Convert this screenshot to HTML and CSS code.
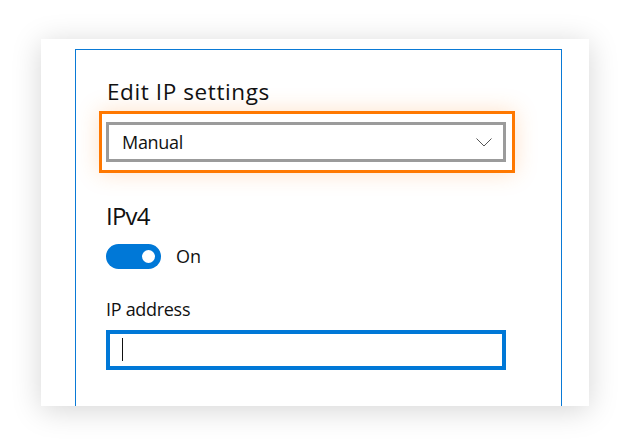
FILE: index.html
```html
<!DOCTYPE html>
<html>
<head>
<meta charset="utf-8">
<link rel="stylesheet" href="styles.css">
</head>
<body>
<div class="page">
  <div class="card">
    <div class="frame">
      <h2 class="title">Edit IP settings</h2>
      <div class="highlight">
        <div class="select">
          <span class="select-value">Manual</span>
          <svg class="chevron" width="16" height="9" viewBox="0 0 16 9"><polyline points="0.5,0.5 8,8 15.5,0.5" fill="none" stroke="#555" stroke-width="1"/></svg>
        </div>
      </div>
      <h3 class="subtitle">IPv4</h3>
      <div class="toggle-row">
        <span class="toggle"><span class="knob"></span></span>
        <span class="toggle-label">On</span>
      </div>
      <label class="field-label">IP address</label>
      <div class="input"><span class="caret"></span></div>
    </div>
  </div>
</div>
</body>
</html>
```
FILE: styles.css
```css
html, body {
  margin: 0;
  padding: 0;
  background: #ffffff;
  font-family: "Open Sans", "Noto Sans", sans-serif;
  color: #111;
}
.page {
  width: 630px;
  height: 446px;
  padding: 39px 0 0 41px;
  box-sizing: border-box;
  overflow: hidden;
}
.card {
  width: 548px;
  height: 367px;
  background: #fff;
  box-shadow: 0 4px 28px rgba(0,0,0,0.17);
  padding: 10px 27px 0 34px;
  box-sizing: border-box;
  overflow: hidden;
}
.frame {
  border: 1px solid #0a7ad6;
  border-bottom: none;
  height: 400px;
  padding: 27px 0 0 30px;
  box-sizing: border-box;
}
.title {
  margin: 0 0 0 1px;
  font-size: 22.5px;
  line-height: 30px;
  letter-spacing: 0.6px;
  font-weight: 400;
}
.highlight {
  margin: 4px 0 0 -7px;
  width: 416px;
  height: 62px;
  box-sizing: border-box;
  border: 3px solid #ff7800;
  padding: 8px 6px 8px 4px;
  box-shadow: 0 0 22px rgba(255,140,40,0.25);
}
.select {
  height: 40px;
  box-sizing: border-box;
  border: 3px solid #9b9b9b;
  display: flex;
  align-items: center;
  justify-content: space-between;
  padding: 0 11px 0 13px;
}
.select-value {
  font-size: 18px;
  line-height: 24px;
  letter-spacing: -0.3px;
}
.chevron {
  display: block;
}
.subtitle {
  margin: 27px 0 0 0;
  font-size: 24px;
  line-height: 32px;
  letter-spacing: -0.8px;
  font-weight: 400;
}
.toggle-row {
  display: flex;
  align-items: center;
  gap: 15px;
  margin-top: 12px;
}
.toggle {
  width: 55px;
  height: 25px;
  border-radius: 13px;
  background: #0078d7;
  display: flex;
  align-items: center;
  justify-content: flex-end;
  padding-right: 6px;
  box-sizing: border-box;
}
.knob {
  width: 13px;
  height: 13px;
  border-radius: 50%;
  background: #fff;
}
.toggle-label {
  font-size: 18px;
  line-height: 25px;
}
.field-label {
  display: block;
  margin-top: 28px;
  font-size: 18px;
  line-height: 24px;
  letter-spacing: -0.3px;
}
.input {
  margin-top: 9px;
  width: 400px;
  height: 40px;
  box-sizing: border-box;
  border: 4px solid #0078d7;
  padding: 4px 0 0 12px;
}
.caret {
  display: block;
  width: 1px;
  height: 23px;
  background: #111;
}
```
